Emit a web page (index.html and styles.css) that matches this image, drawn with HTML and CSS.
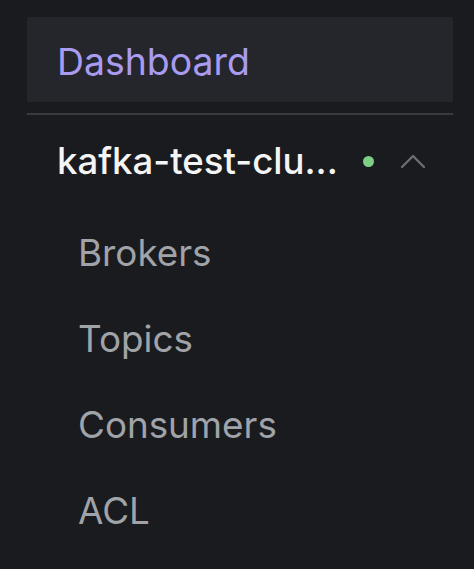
FILE: index.html
```html
<!DOCTYPE html>
<html>
<head>
<meta charset="utf-8">
<link rel="stylesheet" href="styles.css">
</head>
<body>
<nav class="sidebar">
  <div class="dash">Dashboard</div>
  <div class="divider"></div>
  <div class="cluster">
    <span class="cluster-name">kafka-test-clu...</span>
    <span class="dot"></span>
    <svg class="chev" width="26" height="16" viewBox="0 0 26 16"><path d="M2 14 L13 3 L24 14" fill="none" stroke="#6b6d72" stroke-width="2.4" stroke-linecap="round" stroke-linejoin="round"/></svg>
  </div>
  <ul class="items">
    <li>Brokers</li>
    <li>Topics</li>
    <li>Consumers</li>
    <li>ACL</li>
  </ul>
</nav>
</body>
</html>
```
FILE: styles.css
```css
html, body {
  margin: 0;
  padding: 0;
  background: #1a1b1e;
  width: 474px;
  height: 569px;
  overflow: hidden;
}
.sidebar {
  font-family: Inter, "Liberation Sans", sans-serif;
  padding: 17px 21px 0 27px;
  display: flex;
  flex-direction: column;
}
.dash {
  height: 85px;
  box-sizing: border-box;
  padding-top: 3px;
  background: #25262b;
  color: #a99cf0;
  font-size: 37.4px;
  display: flex;
  align-items: center;
  padding-left: 30px;
  border-radius: 2px;
}
.divider {
  height: 2px;
  background: #3a3b40;
  margin-top: 11px;
}
.cluster {
  display: flex;
  align-items: center;
  height: 92px;
  padding-left: 30px;
}
.cluster-name {
  color: #f4f4f5;
  font-size: 36.6px;
  font-weight: 500;
}
.dot {
  width: 11px;
  height: 11px;
  border-radius: 50%;
  background: #7ccf85;
  margin-left: 25px;
}
.chev {
  margin-left: 26px;
}
.items {
  list-style: none;
  margin: 0;
  padding: 3px 0 0 51px;
}
.items li {
  color: #a0a3a8;
  font-size: 36.8px;
  height: 86px;
  line-height: 86px;
}
```
